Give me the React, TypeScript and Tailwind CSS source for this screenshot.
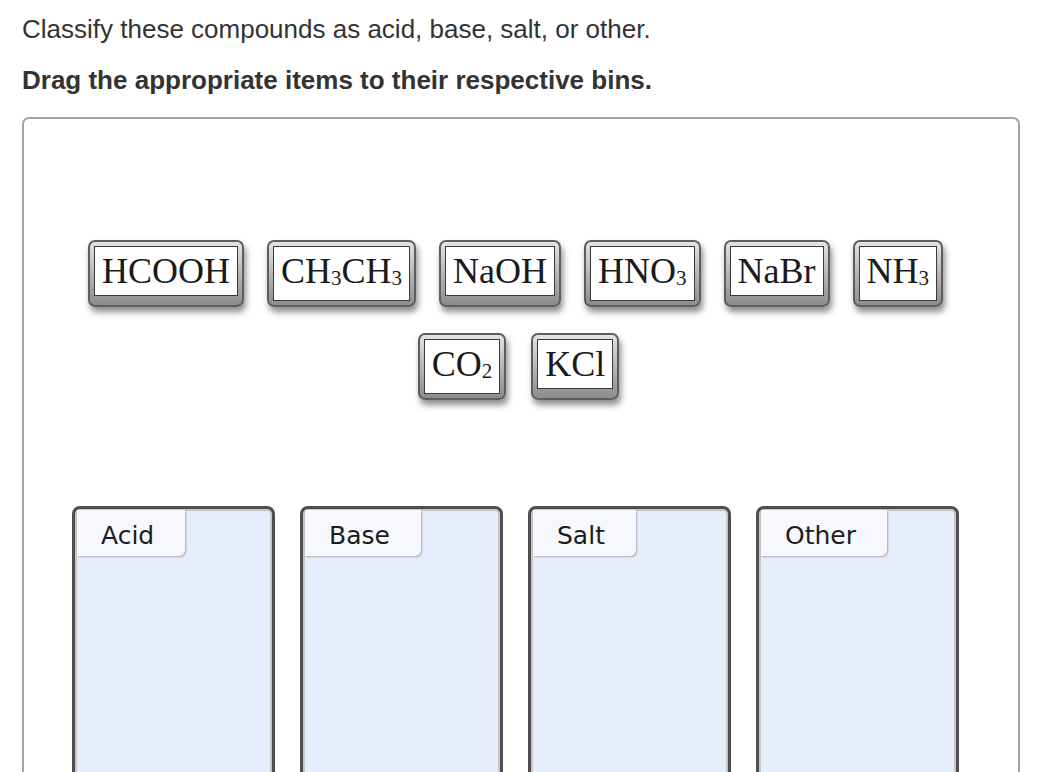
import React from "react";

type Part = { t: string; sub?: boolean };

const compounds: Part[][] = [
  [{ t: "HCOOH" }],
  [{ t: "CH" }, { t: "3", sub: true }, { t: "CH" }, { t: "3", sub: true }],
  [{ t: "NaOH" }],
  [{ t: "HNO" }, { t: "3", sub: true }],
  [{ t: "NaBr" }],
  [{ t: "NH" }, { t: "3", sub: true }],
];

const moreCompounds: Part[][] = [
  [{ t: "CO" }, { t: "2", sub: true }],
  [{ t: "KCl" }],
];

const bins = ["Acid", "Base", "Salt", "Other"];

function Chip({ parts }: { parts: Part[] }) {
  return (
    <div className="rounded-[7px] border-2 border-[#5e5e5e] bg-gradient-to-b from-[#e4e4e4] to-[#8c8c8c] p-[4px] shadow-[2px_5px_6px_rgba(0,0,0,0.45)]">
      <div className="border border-[#3a3a3a] bg-white px-[7px] font-['Liberation_Serif',serif] text-[36px] leading-[48px] text-[#1a1a1a] whitespace-nowrap">
        {parts.map((p, i) =>
          p.sub ? (
            <span key={i} className="relative top-[2px] text-[21px]">
              {p.t}
            </span>
          ) : (
            <span key={i}>{p.t}</span>
          )
        )}
      </div>
    </div>
  );
}

function Bin({ label }: { label: string }) {
  return (
    <div className="h-[320px] w-[203px] rounded-t-[8px] border-[3px] border-[#4e4e4e] bg-[#e6edfb] shadow-[inset_0_0_0_2px_#c6c6c6]">
      <div className="flex">
        <div className="ml-[2px] mt-[1px] rounded-br-[6px] bg-[#f7f8fd] pl-[24px] pr-[31px] pt-[11px] pb-[5px] font-['DejaVu_Sans',sans-serif] text-[25px] leading-[30px] text-[#1c1c1c] shadow-[1px_1px_2px_rgba(0,0,0,0.28)]">
          {label}
        </div>
      </div>
    </div>
  );
}

export default function App() {
  return (
    <main className="min-h-screen overflow-hidden bg-white px-[22px] pt-[13px] font-['Liberation_Sans',Arial,sans-serif] text-[#333]">
      <p className="text-[26px] leading-[32px]">
        Classify these compounds as acid, base, salt, or other.
      </p>
      <p className="mt-[19px] text-[26px] font-bold leading-[32px]">
        Drag the appropriate items to their respective bins.
      </p>

      <div className="mt-[21px] w-[998px] rounded-t-[7px] border-2 border-b-0 border-[#a3a3a3] pb-[40px] pr-[11px] pt-[121px]">
        <div className="flex justify-center gap-[23px]">
          {compounds.map((c, i) => (
            <Chip key={i} parts={c} />
          ))}
        </div>
        <div className="mt-[26px] flex justify-center gap-[25px] pl-[6px]">
          {moreCompounds.map((c, i) => (
            <Chip key={i} parts={c} />
          ))}
        </div>

        <div className="mt-[106px] flex justify-center gap-[25px]">
          {bins.map((b) => (
            <Bin key={b} label={b} />
          ))}
        </div>
      </div>
    </main>
  );
}
